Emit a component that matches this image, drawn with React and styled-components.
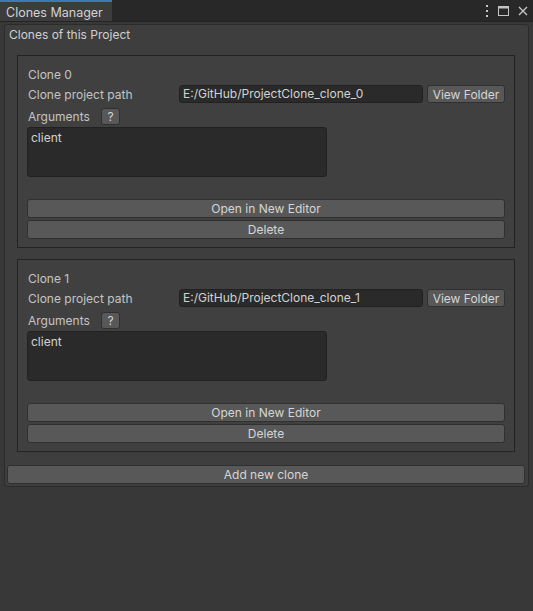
import styled, { createGlobalStyle } from "styled-components";

const GlobalStyle = createGlobalStyle`
  html, body {
    margin: 0;
    padding: 0;
    background: #383838;
  }
  body {
    font-family: Inter, "Noto Sans", sans-serif;
    font-size: 12px;
    color: #c4c4c4;
  }
`;

const clones = [
  { id: 0, path: "E:/GitHub/ProjectClone_clone_0", args: "client" },
  { id: 1, path: "E:/GitHub/ProjectClone_clone_1", args: "client" },
];

export default function App() {
  return (
    <Window>
      <GlobalStyle />
      <TitleBar>
        <Tab>Clones Manager</Tab>
        <TitleIcons>
          <svg width="4" height="12" viewBox="0 0 4 12">
            <rect x="1" y="0" width="2" height="2" fill="#c4c4c4" />
            <rect x="1" y="5" width="2" height="2" fill="#c4c4c4" />
            <rect x="1" y="10" width="2" height="2" fill="#c4c4c4" />
          </svg>
          <svg width="11" height="10" viewBox="0 0 11 10">
            <rect x="0.5" y="0.5" width="10" height="9" fill="none" stroke="#c4c4c4" />
            <rect x="0.5" y="0.5" width="10" height="2" fill="#c4c4c4" />
          </svg>
          <svg width="10" height="10" viewBox="0 0 10 10">
            <path d="M1 1 L9 9 M9 1 L1 9" stroke="#c4c4c4" strokeWidth="1.4" />
          </svg>
        </TitleIcons>
      </TitleBar>
      <Body>
        <Outer>
          <Header>Clones of this Project</Header>
          <CloneList>
            {clones.map((c) => (
              <CloneBox key={c.id}>
                <Row>
                  <Label>Clone {c.id}</Label>
                </Row>
                <Row>
                  <Label $width="151px">Clone project path</Label>
                  <PathField>{c.path}</PathField>
                  <SmallButton>View Folder</SmallButton>
                </Row>
                <Row $top="2px">
                  <Label $width="73px">Arguments</Label>
                  <HelpButton>?</HelpButton>
                </Row>
                <ArgsArea>{c.args}</ArgsArea>
                <Actions>
                  <WideButton>Open in New Editor</WideButton>
                  <WideButton>Delete</WideButton>
                </Actions>
              </CloneBox>
            ))}
          </CloneList>
          <AddButton>Add new clone</AddButton>
        </Outer>
      </Body>
    </Window>
  );
}

const Window = styled.div`
  min-height: 100vh;
  background: #383838;
`;

const TitleBar = styled.div`
  height: 22px;
  display: flex;
  align-items: stretch;
  justify-content: space-between;
  background: #282828;
  border-bottom: 1px solid #232323;
  box-sizing: border-box;
`;

const Tab = styled.div`
  width: 112px;
  box-sizing: border-box;
  background: #3c3c3c;
  border-top: 2px solid #3a79bb;
  padding: 1px 0 0 6px;
  font-size: 12.5px;
  color: #d2d2d2;
  display: flex;
  align-items: center;
`;

const TitleIcons = styled.div`
  display: flex;
  align-items: center;
  gap: 9px;
  padding-right: 5px;
`;

const Body = styled.div`
  padding: 2px 4px;
`;

const Outer = styled.div`
  background: #3e3e3e;
  border: 1px solid #2b2b2b;
  border-radius: 3px;
  padding: 0 3px 2px 2px;
`;

const Header = styled.div`
  height: 20px;
  line-height: 20px;
  padding-left: 2px;
  color: #d0d0d0;
`;

const CloneList = styled.div`
  display: flex;
  flex-direction: column;
  gap: 11px;
  margin: 10px 10px 13px 10px;
`;

const CloneBox = styled.div`
  background: #404040;
  border: 1px solid #232323;
  padding: 9px 9px 8px 9px;
  display: flex;
  flex-direction: column;
  gap: 2px;
`;

const Row = styled.div`
  height: 18px;
  margin-top: ${(p) => p.$top || "0"};
  display: flex;
  align-items: center;
`;

const Label = styled.div`
  width: ${(p) => p.$width || "auto"};
  padding-left: 1px;
  flex-shrink: 0;
`;

const PathField = styled.div`
  width: 244px;
  height: 18px;
  box-sizing: border-box;
  background: #2a2a2a;
  border: 1px solid #212121;
  border-radius: 3px;
  padding-left: 3px;
  line-height: 16px;
  color: #d2d2d2;
`;

const buttonBase = `
  box-sizing: border-box;
  background: #585858;
  border: 1px solid #303030;
  border-radius: 3px;
  color: #d6d6d6;
  font-family: Inter, "Noto Sans", sans-serif;
  font-size: 12px;
  display: flex;
  align-items: center;
  justify-content: center;
`;

const SmallButton = styled.div`
  ${buttonBase}
  margin-left: 4px;
  width: 78px;
  height: 18px;
`;

const HelpButton = styled.div`
  ${buttonBase}
  width: 19px;
  height: 17px;
`;

const ArgsArea = styled.div`
  width: 300px;
  height: 50px;
  box-sizing: border-box;
  background: #2a2a2a;
  border: 1px solid #212121;
  border-radius: 3px;
  padding: 2px 3px;
  color: #d2d2d2;
`;

const Actions = styled.div`
  margin-top: 20px;
  display: flex;
  flex-direction: column;
  gap: 2px;
`;

const WideButton = styled.div`
  ${buttonBase}
  height: 19px;
`;

const AddButton = styled.div`
  ${buttonBase}
  height: 19px;
`;
